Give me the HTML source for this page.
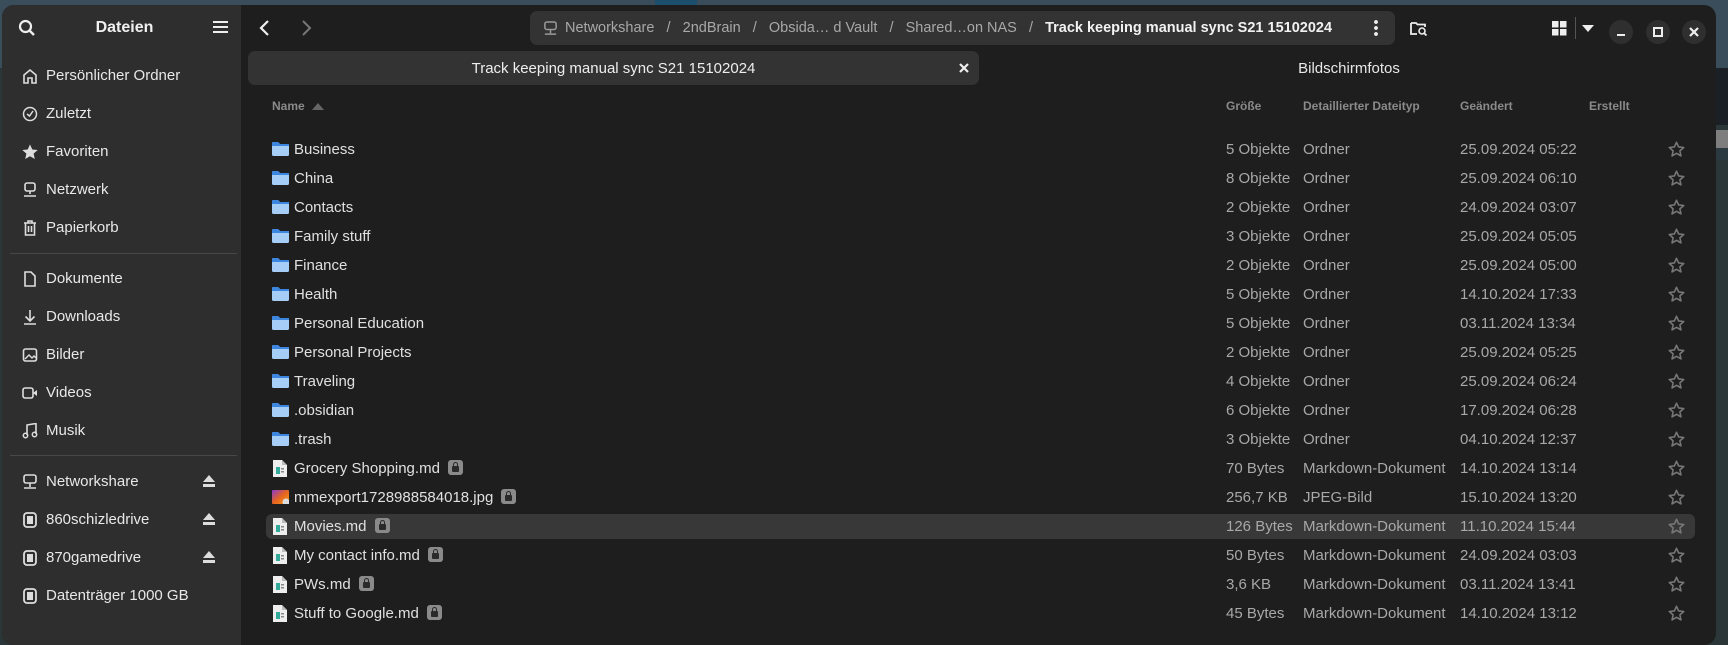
<!DOCTYPE html>
<html><head><meta charset="utf-8"><style>
*{margin:0;padding:0;box-sizing:border-box}
body{width:1728px;height:633px;overflow:hidden;background:#2a3638;font-family:"Liberation Sans","DejaVu Sans",sans-serif;position:relative}
.abs{position:absolute}
#win{position:absolute;left:2px;top:5px;width:1714px;height:640px;border-radius:12px;overflow:hidden;background:#1e1e1e}
#side{position:absolute;left:0;top:0;width:239px;height:100%;background:#2e2e2e}
.si{position:absolute;left:44px;color:#e8e8e8;font-size:15px;line-height:18px;margin-top:1px}
.ic{position:absolute;left:20px;width:16px;height:16px}
.sep{position:absolute;left:8px;width:227px;height:1px;background:#474747}
.row{position:absolute;left:264px;width:1428px;height:25px;font-size:15px;line-height:25px;color:#e0e0e0}
.row .n{position:absolute;left:28px}
.row .s,.row .t,.row .d{position:absolute;color:#a8a8a8}
.row .s{left:960px}.row .t{left:1037px}.row .d{left:1194px}
.row .st{position:absolute;left:1402px;top:4px}
.hdr{position:absolute;top:94px;font-size:12px;font-weight:bold;color:#8a8a8a}
.lock{display:inline-block;width:15px;height:15px;background:#8a8a8a;border-radius:3px;vertical-align:-2px;margin-left:8px;position:relative}
.lock:before{content:"";position:absolute;left:5px;top:2px;width:3px;height:4px;border:1.5px solid #2a2a2a;border-bottom:none;border-radius:3px 3px 0 0}
.lock:after{content:"";position:absolute;left:4px;top:6px;width:7px;height:6px;background:#2a2a2a;border-radius:1px}
.circ{position:absolute;top:15px;width:24px;height:24px;border-radius:50%;background:#2f2f2f}
</style></head><body>
<div class="abs" style="left:0;top:0;width:1728px;height:68px;background:#3a4d5b"></div>
<div class="abs" style="left:1716px;top:68px;width:12px;height:57px;background:#1a2026"></div>
<div class="abs" style="left:1716px;top:130px;width:12px;height:18px;background:#7e7e7e"></div>
<div class="abs" style="left:1716px;top:148px;width:12px;height:12px;background:#2a3a40"></div>
<div class="abs" style="left:655px;top:0;width:42px;height:6px;background:#1c4f6e"></div>
<div id="win">
<div id="side">
 <svg class="abs" style="left:16px;top:14px" width="18" height="18" viewBox="0 0 18 18"><circle cx="7.5" cy="7.5" r="5.5" fill="none" stroke="#eee" stroke-width="2.2"/><path d="M11.5 11.5l4.5 4.5" stroke="#eee" stroke-width="2.4"/></svg>
 <div class="abs" style="left:0;width:245px;top:14px;text-align:center;color:#f0f0f0;font-weight:bold;font-size:16px">Dateien</div>
 <svg class="abs" style="left:211px;top:15px" width="16" height="14"><path d="M0 2h15M0 7h15M0 12h15" stroke="#eee" stroke-width="2"/></svg>
 <svg class="ic" style="top:63px" viewBox="0 0 16 16"><path d="M2 15V7l6-5 6 5v8H10v-5H6v5z" fill="none" stroke="#ddd" stroke-width="1.6"/></svg><div class="si" style="top:61px">Persönlicher Ordner</div>
 <svg class="ic" style="top:101px" viewBox="0 0 16 16"><circle cx="8" cy="8" r="6.5" fill="none" stroke="#ddd" stroke-width="1.5"/><path d="M5 8l2.5 2L11 5" fill="none" stroke="#ddd" stroke-width="1.5"/></svg><div class="si" style="top:99px">Zuletzt</div>
 <svg class="ic" style="top:139px" viewBox="0 0 16 16"><path d="M8 0.5l2.3 5 5.4.5-4.1 3.6 1.2 5.4L8 12.2 3.2 15l1.2-5.4L.3 6l5.4-.5z" fill="#ddd"/></svg><div class="si" style="top:137px">Favoriten</div>
 <svg class="ic" style="top:177px" viewBox="0 0 16 16"><rect x="3" y="1" width="10" height="8" rx="2" fill="none" stroke="#ddd" stroke-width="1.6"/><path d="M8 9v3M2 14h12" stroke="#ddd" stroke-width="1.6"/></svg><div class="si" style="top:175px">Netzwerk</div>
 <svg class="ic" style="top:215px" viewBox="0 0 16 16"><path d="M2 3h12M6 3V1h4v2M3.5 3v12h9V3M6.5 6v6M9.5 6v6" fill="none" stroke="#ddd" stroke-width="1.6"/></svg><div class="si" style="top:213px">Papierkorb</div>
 <div class="sep" style="top:248px"></div>
 <svg class="ic" style="top:266px" viewBox="0 0 16 16"><path d="M3 1h6l4 4v10H3z" fill="none" stroke="#ddd" stroke-width="1.6"/></svg><div class="si" style="top:264px">Dokumente</div>
 <svg class="ic" style="top:304px" viewBox="0 0 16 16"><path d="M8 1v11M3.5 7.5 8 12l4.5-4.5M2 15h12" fill="none" stroke="#ddd" stroke-width="1.6"/></svg><div class="si" style="top:302px">Downloads</div>
 <svg class="ic" style="top:342px" viewBox="0 0 16 16"><rect x="1.5" y="2" width="13" height="12" rx="2" fill="none" stroke="#ddd" stroke-width="1.6"/><path d="M3 12l4-4 3 3 2-2 2 2" fill="none" stroke="#ddd" stroke-width="1.4"/></svg><div class="si" style="top:340px">Bilder</div>
 <svg class="ic" style="top:380px" viewBox="0 0 16 16"><rect x="1" y="3" width="10" height="10" rx="2" fill="none" stroke="#ddd" stroke-width="1.6"/><path d="M11 8l4-3v6z" fill="#ddd"/></svg><div class="si" style="top:378px">Videos</div>
 <svg class="ic" style="top:418px" viewBox="0 0 16 16"><path d="M5 12V2l9-1.5V11" fill="none" stroke="#ddd" stroke-width="1.6"/><circle cx="3.5" cy="12.5" r="2.2" fill="none" stroke="#ddd" stroke-width="1.5"/><circle cx="12.5" cy="11.5" r="2.2" fill="none" stroke="#ddd" stroke-width="1.5"/></svg><div class="si" style="top:416px">Musik</div>
 <div class="sep" style="top:450px"></div>
 <svg class="ic" style="top:469px" viewBox="0 0 16 16"><rect x="2" y="1" width="12" height="8" rx="2" fill="none" stroke="#ddd" stroke-width="1.6"/><path d="M8 9v4M2 14h12" stroke="#ddd" stroke-width="1.6"/></svg><div class="si" style="top:467px">Networkshare</div>
 <svg class="ic" style="top:507px" viewBox="0 0 16 16"><rect x="2" y="1" width="12" height="14" rx="3" fill="none" stroke="#ddd" stroke-width="1.8"/><rect x="5" y="4" width="6" height="8" fill="#ddd"/></svg><div class="si" style="top:505px">860schizledrive</div>
 <svg class="ic" style="top:545px" viewBox="0 0 16 16"><rect x="2" y="1" width="12" height="14" rx="3" fill="none" stroke="#ddd" stroke-width="1.8"/><rect x="5" y="4" width="6" height="8" fill="#ddd"/></svg><div class="si" style="top:543px">870gamedrive</div>
 <svg class="ic" style="top:583px" viewBox="0 0 16 16"><rect x="2" y="1" width="12" height="14" rx="3" fill="none" stroke="#ddd" stroke-width="1.8"/><rect x="5" y="4" width="6" height="8" fill="#ddd"/></svg><div class="si" style="top:581px">Datenträger 1000 GB</div>
 <svg class="abs" style="left:200px;top:470px" width="14" height="13"><path d="M7 0l6 7H1z" fill="#ddd"/><rect x="1" y="9" width="12" height="3" fill="#ddd"/></svg>
 <svg class="abs" style="left:200px;top:508px" width="14" height="13"><path d="M7 0l6 7H1z" fill="#ddd"/><rect x="1" y="9" width="12" height="3" fill="#ddd"/></svg>
 <svg class="abs" style="left:200px;top:546px" width="14" height="13"><path d="M7 0l6 7H1z" fill="#ddd"/><rect x="1" y="9" width="12" height="3" fill="#ddd"/></svg>
</div>
<svg class="abs" style="left:256px;top:14px" width="14" height="18"><path d="M10 2L3 9l7 7" fill="none" stroke="#eee" stroke-width="2.2"/></svg>
<svg class="abs" style="left:297px;top:14px" width="14" height="18"><path d="M4 2l7 7-7 7" fill="none" stroke="#777" stroke-width="2"/></svg>
<div class="abs" style="left:528px;top:6px;width:865px;height:34px;background:#333;border-radius:7px"></div>
<svg class="abs" style="left:541px;top:16px" width="15" height="15" viewBox="0 0 16 16"><rect x="2" y="1" width="12" height="8" rx="2" fill="none" stroke="#999" stroke-width="1.6"/><path d="M8 9v4M2 14h12" stroke="#999" stroke-width="1.6"/></svg>
<div class="abs" style="left:563px;top:15px;font-size:14.5px;color:#a8a8a8;white-space:pre">Networkshare   /   2ndBrain   /   Obsida… d Vault   /   Shared…on NAS   /   <b style="color:#f2f2f2">Track keeping manual sync S21 15102024</b></div>
<div class="abs" style="left:1372px;top:14px;width:4px;height:18px;background:radial-gradient(circle,#eee 1.8px,transparent 2px) 0 0/4px 6px"></div>
<svg class="abs" style="left:1408px;top:15px" width="18" height="16"><path d="M1 3h5l1.5 1.5H15V7M1 3v11h6" fill="none" stroke="#eee" stroke-width="1.8"/><circle cx="12" cy="11" r="3" fill="none" stroke="#eee" stroke-width="1.6"/><path d="M14 13l2.5 2.5" stroke="#eee" stroke-width="1.8"/></svg>
<svg class="abs" style="left:1550px;top:16px" width="15" height="15"><rect x="0" y="0" width="6.5" height="6.5" fill="#eee"/><rect x="8" y="0" width="6.5" height="6.5" fill="#eee"/><rect x="0" y="8" width="6.5" height="6.5" fill="#eee"/><rect x="8" y="8" width="6.5" height="6.5" fill="#eee"/></svg>
<div class="abs" style="left:1573px;top:12px;width:1px;height:22px;background:#555"></div>
<svg class="abs" style="left:1580px;top:20px" width="12" height="7"><path d="M0 0h12L6 7z" fill="#eee"/></svg>
<div class="circ" style="left:1607px"></div><div class="abs" style="left:1615px;top:29px;width:8px;height:2px;background:#eee"></div>
<div class="circ" style="left:1644px"></div><div class="abs" style="left:1651px;top:22px;width:10px;height:10px;border:2px solid #eee"></div>
<div class="circ" style="left:1680px"></div><svg class="abs" style="left:1687px;top:22px" width="10" height="10"><path d="M1 1l8 8M9 1l-8 8" stroke="#eee" stroke-width="2.2"/></svg>
<div class="abs" style="left:246px;top:46px;width:731px;height:34px;background:#333;border-radius:7px"></div>
<div class="abs" style="left:246px;top:55px;width:731px;text-align:center;font-size:15px;color:#eee">Track keeping manual sync S21 15102024</div>
<svg class="abs" style="left:957px;top:58px" width="10" height="10"><path d="M1 1l8 8M9 1l-8 8" stroke="#eee" stroke-width="2.2"/></svg>
<div class="abs" style="left:1000px;top:55px;width:694px;text-align:center;font-size:15px;color:#e8e8e8">Bildschirmfotos</div>
<div class="hdr" style="left:270px">Name</div>
<svg class="abs" style="left:310px;top:98px" width="12" height="7"><path d="M6 0l6 7H0z" fill="#666"/></svg>
<div class="hdr" style="left:1224px">Größe</div>
<div class="hdr" style="left:1301px">Detaillierter Dateityp</div>
<div class="hdr" style="left:1458px">Geändert</div>
<div class="hdr" style="left:1587px">Erstellt</div>
<div class="abs" style="left:264px;top:509px;width:1429px;height:25px;background:#383838;border-radius:6px"></div>
<div id="rows"></div>
</div>
<script>
var F='<svg width="17" height="14" viewBox="0 0 17 14" style="position:absolute;left:6px;top:5px"><path d="M0 1.5Q0 0 1.5 0H6l2 2h7.5Q17 2 17 3.5V12.5Q17 14 15.5 14H1.5Q0 14 0 12.5z" fill="#a6cdf5"/><path d="M0 1.5Q0 0 1.5 0H6l2 2h9v2H0z" fill="#3d86e0"/></svg>';
var D='<svg width="14" height="17" viewBox="0 0 14 17" style="position:absolute;left:7px;top:4px"><path d="M0 0h9l5 5v12H0z" fill="#eee"/><path d="M9 0v5h5" fill="#bbb"/><rect x="3" y="7" width="4" height="7" fill="#3a9"/><rect x="8" y="8" width="3" height="1.5" fill="#888"/><rect x="8" y="11" width="3" height="1.5" fill="#888"/></svg>';
var J='<svg width="17" height="14" style="position:absolute;left:6px;top:5px"><defs><linearGradient id="g" x1="0" y1="0" x2="1" y2="1"><stop offset="0" stop-color="#8a3ad0"/><stop offset=".5" stop-color="#e6641e"/><stop offset="1" stop-color="#f5a020"/></linearGradient></defs><rect width="17" height="14" rx="1" fill="url(#g)"/><circle cx="14" cy="12" r="3.5" fill="#ddd"/></svg>';
var r=[['Business','5 Objekte','Ordner','25.09.2024 05:22',F],['China','8 Objekte','Ordner','25.09.2024 06:10',F],['Contacts','2 Objekte','Ordner','24.09.2024 03:07',F],['Family stuff','3 Objekte','Ordner','25.09.2024 05:05',F],['Finance','2 Objekte','Ordner','25.09.2024 05:00',F],['Health','5 Objekte','Ordner','14.10.2024 17:33',F],['Personal Education','5 Objekte','Ordner','03.11.2024 13:34',F],['Personal Projects','2 Objekte','Ordner','25.09.2024 05:25',F],['Traveling','4 Objekte','Ordner','25.09.2024 06:24',F],['.obsidian','6 Objekte','Ordner','17.09.2024 06:28',F],['.trash','3 Objekte','Ordner','04.10.2024 12:37',F],['Grocery Shopping.md','70 Bytes','Markdown-Dokument','14.10.2024 13:14',D,1],['mmexport1728988584018.jpg','256,7 KB','JPEG-Bild','15.10.2024 13:20',J,1],['Movies.md','126 Bytes','Markdown-Dokument','11.10.2024 15:44',D,1],['My contact info.md','50 Bytes','Markdown-Dokument','24.09.2024 03:03',D,1],['PWs.md','3,6 KB','Markdown-Dokument','03.11.2024 13:41',D,1],['Stuff to Google.md','45 Bytes','Markdown-Dokument','14.10.2024 13:12',D,1]];
var S='<svg class="st" width="17" height="17" viewBox="0 0 16 16"><path d="M8 1.2l2 4.4 4.8.5-3.6 3.2 1 4.7L8 11.6 3.8 14l1-4.7L1.2 6.1 6 5.6z" fill="none" stroke="#777" stroke-width="1.5" stroke-linejoin="round"/></svg>';
var h='';r.forEach(function(x,i){h+='<div class="row" style="top:'+(132+i*29)+'px">'+x[4]+'<span class="n">'+x[0]+(x[5]?'<span class="lock"></span>':'')+'</span><span class="s">'+x[1]+'</span><span class="t">'+x[2]+'</span><span class="d">'+x[3]+'</span>'+S+'</div>'});
document.getElementById('rows').innerHTML=h;
</script>
</body></html>
